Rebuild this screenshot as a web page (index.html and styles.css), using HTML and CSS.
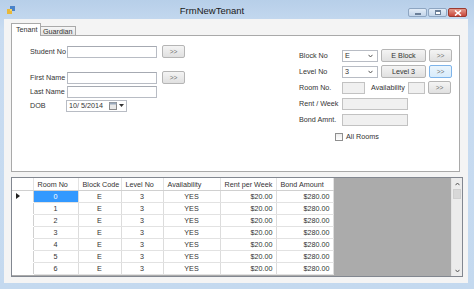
FILE: index.html
```html
<!DOCTYPE html>
<html lang="en">
<head>
  <meta charset="UTF-8">
  <title>FrmNewTenant</title>
  <link rel="stylesheet" href="styles.css">
</head>
<body>
  <div class="window">
    <div class="titlebar">
      <svg class="app-icon" width="8" height="8" viewBox="0 0 8 8">
        <rect x="0" y="3" width="5" height="5" fill="#e8b83a"/>
        <rect x="3" y="0" width="5" height="5" fill="#4a82c8"/>
        <rect x="3" y="3" width="2" height="2" fill="#f3d36b"/>
      </svg>
      <div class="title">FrmNewTenant</div>
      <div class="caption-btns">
        <div class="cap-btn"><span class="min-glyph"></span></div>
        <div class="cap-btn"><span class="max-glyph"></span></div>
        <div class="cap-btn close">
          <svg width="8" height="6" viewBox="0 0 8 6"><path d="M1 0.5 L7 5.5 M7 0.5 L1 5.5" stroke="#fff" stroke-width="1.6"/></svg>
        </div>
      </div>
    </div>

    <div class="client">
      <div class="tabs">
        <div class="tab active">Tenant</div>
        <div class="tab">Guardian</div>
      </div>
      <div class="tabpage">
        <div class="left">
          <div class="row">
            <span class="label">Student No</span>
            <span class="input w90"></span>
            <button class="btn more">&gt;&gt;</button>
          </div>
          <div class="row gap-big">
            <span class="label">First Name</span>
            <span class="input w90"></span>
            <button class="btn more">&gt;&gt;</button>
          </div>
          <div class="row gap-small">
            <span class="label">Last Name</span>
            <span class="input w90"></span>
          </div>
          <div class="row gap-small">
            <span class="label">DOB</span>
            <span class="date">
              <span class="date-text">10/ 5/2014</span>
              <svg width="8" height="8" viewBox="0 0 8 8">
                <rect x="0.5" y="0.5" width="7" height="7" fill="#e8e8e8" stroke="#8a8a8a"/>
                <rect x="0.5" y="0.5" width="7" height="2" fill="#9aa9bb"/>
              </svg>
              <svg width="5" height="3" viewBox="0 0 5 3"><path d="M0 0 H5 L2.5 3 Z" fill="#333"/></svg>
            </span>
          </div>
        </div>

        <div class="right">
          <div class="row">
            <span class="label r">Block No</span>
            <span class="combo"><span>E</span><svg width="5" height="4" viewBox="0 0 5 4"><path d="M0.5 0.8 L2.5 3 L4.5 0.8" fill="none" stroke="#555" stroke-width="1"/></svg></span>
            <button class="btn wide">E Block</button>
            <button class="btn more">&gt;&gt;</button>
          </div>
          <div class="row">
            <span class="label r">Level No</span>
            <span class="combo"><span>3</span><svg width="5" height="4" viewBox="0 0 5 4"><path d="M0.5 0.8 L2.5 3 L4.5 0.8" fill="none" stroke="#555" stroke-width="1"/></svg></span>
            <button class="btn wide">Level 3</button>
            <button class="btn more hot">&gt;&gt;</button>
          </div>
          <div class="row">
            <span class="label r">Room No.</span>
            <span class="input ro w23"></span>
            <span class="avail">Availability</span>
            <span class="input ro w17"></span>
            <button class="btn more">&gt;&gt;</button>
          </div>
          <div class="row">
            <span class="label r">Rent / Week</span>
            <span class="input ro w66"></span>
          </div>
          <div class="row">
            <span class="label r">Bond Amnt.</span>
            <span class="input ro w66"></span>
          </div>
          <div class="check-row">
            <span class="checkbox"></span>
            <span>All Rooms</span>
          </div>
        </div>
      </div>

      <div class="grid">
        <table class="data">
          <colgroup>
            <col class="c-head"><col class="c-room"><col class="c-block"><col class="c-level">
            <col class="c-avail"><col class="c-rent"><col class="c-bond">
          </colgroup>
          <thead>
            <tr>
              <th></th><th>Room No</th><th>Block Code</th><th>Level No</th>
              <th>Availability</th><th>Rent per Week</th><th>Bond Amount</th>
            </tr>
          </thead>
          <tbody>
            <tr>
              <td class="rh"><svg width="4" height="6" viewBox="0 0 4 6"><path d="M0 0 L4 3 L0 6 Z" fill="#222"/></svg></td>
              <td class="sel">0</td><td>E</td><td>3</td><td>YES</td><td class="num">$20.00</td><td class="num">$280.00</td>
            </tr>
            <tr><td class="rh"></td><td>1</td><td>E</td><td>3</td><td>YES</td><td class="num">$20.00</td><td class="num">$280.00</td></tr>
            <tr><td class="rh"></td><td>2</td><td>E</td><td>3</td><td>YES</td><td class="num">$20.00</td><td class="num">$280.00</td></tr>
            <tr><td class="rh"></td><td>3</td><td>E</td><td>3</td><td>YES</td><td class="num">$20.00</td><td class="num">$280.00</td></tr>
            <tr><td class="rh"></td><td>4</td><td>E</td><td>3</td><td>YES</td><td class="num">$20.00</td><td class="num">$280.00</td></tr>
            <tr><td class="rh"></td><td>5</td><td>E</td><td>3</td><td>YES</td><td class="num">$20.00</td><td class="num">$280.00</td></tr>
            <tr><td class="rh"></td><td>6</td><td>E</td><td>3</td><td>YES</td><td class="num">$20.00</td><td class="num">$280.00</td></tr>
          </tbody>
        </table>
        <div class="fill"></div>
        <div class="scrollbar">
          <div class="sb-arrow"><svg width="5" height="4" viewBox="0 0 5 4"><path d="M0.5 3.2 L2.5 1 L4.5 3.2" fill="none" stroke="#555" stroke-width="1"/></svg></div>
          <div class="sb-thumb"></div>
          <div class="sb-track"></div>
          <div class="sb-arrow"><svg width="5" height="4" viewBox="0 0 5 4"><path d="M0.5 0.8 L2.5 3 L4.5 0.8" fill="none" stroke="#555" stroke-width="1"/></svg></div>
        </div>
      </div>
    </div>
  </div>
</body>
</html>
```

FILE: styles.css
```css
body {
  margin: 0;
  padding: 0;
  font-family: "Liberation Sans", Arial, sans-serif;
  font-size: 7.2px;
  color: #333;
  background: #c4d9ef;
}
.window {
  width: 474px;
  height: 289px;
  display: flex;
  flex-direction: column;
  background: linear-gradient(#b7cfe9, #c9dcf1 30px, #c4d9ef);
}
.titlebar {
  height: 19px;
  display: flex;
  align-items: center;
  padding-left: 7px;
}
.app-icon {
  margin-top: 1px;
}
.title {
  flex: 1;
  text-align: center;
  font-size: 9.5px;
  color: #1a1a1a;
  padding-left: 2px;
  margin-top: 2px;
}
.caption-btns {
  display: flex;
  align-self: flex-start;
  margin-top: 8px;
  margin-right: 7px;
}
.cap-btn {
  width: 19px;
  height: 9px;
  border: 1px solid #8ea6c2;
  border-radius: 2px;
  background: linear-gradient(#e2ecf7, #c3d5ea);
  display: flex;
  align-items: center;
  justify-content: center;
  box-sizing: border-box;
  margin-left: 1px;
}
.cap-btn.close {
  background: linear-gradient(#e39a8c, #c9463a);
  border-color: #9c3a30;
}
.min-glyph {
  width: 6px;
  height: 2px;
  background: #fff;
  border: 1px solid #6a7f99;
  box-sizing: border-box;
  margin-top: 2px;
}
.max-glyph {
  width: 6px;
  height: 5px;
  border: 1px solid #6a7f99;
  border-top-width: 2px;
  background: #fff;
  box-sizing: border-box;
}
.client {
  flex: 1;
  margin: 0 6px 6px 4px;
  background: #f4f4f4;
  padding: 4px 0 0 7px;
  display: flex;
  flex-direction: column;
}
.tabs {
  display: flex;
  align-items: flex-end;
  height: 12px;
  position: relative;
  z-index: 1;
}
.tab {
  height: 9px;
  line-height: 9px;
  padding: 0 2px;
  border: 1px solid #a9a9a9;
  border-bottom: none;
  border-left: none;
  background: linear-gradient(#f6f6f6, #e4e4e4);
  box-sizing: border-box;
  white-space: nowrap;
}
.tab.active {
  height: 13px;
  line-height: 12px;
  background: #fff;
  margin-bottom: -1px;
  width: 30px;
  padding-left: 4px;
  border-left: 1px solid #a9a9a9;
}
.tabpage {
  width: 449px;
  height: 137px;
  box-sizing: border-box;
  border: 1px solid #a9a9a9;
  background: #fff;
  display: flex;
}
.left {
  padding: 9px 0 0 18px;
}
.right {
  margin-left: auto;
  padding: 13px 7px 0 0;
  width: 153px;
}
.row {
  display: flex;
  align-items: center;
  height: 13px;
  white-space: nowrap;
}
.right .row {
  margin-bottom: 3px;
}
.gap-big {
  margin-top: 13px;
}
.gap-small {
  margin-top: 1px;
}
.label {
  width: 37px;
  flex-shrink: 0;
}
.label.r {
  width: 43px;
}
.input {
  height: 12px;
  box-sizing: border-box;
  border: 1px solid #b8bcc4;
  border-top-color: #a6aab2;
  background: #fff;
  flex-shrink: 0;
}
.input.ro {
  background: #f0f0f0;
  border-color: #c2c2c2;
}
.w90 { width: 90px; }
.w66 { width: 66px; }
.w23 { width: 23px; }
.w17 { width: 17px; }
.btn {
  font-family: inherit;
  font-size: 7.2px;
  height: 13px;
  padding: 0;
  border: 1px solid #b5b5b5;
  border-radius: 2px;
  background: linear-gradient(#f4f4f4, #e0e0e0);
  color: #333;
  flex-shrink: 0;
}
.btn.more {
  width: 23px;
  margin-left: 5px;
  color: #707070;
  font-size: 6.6px;
}
.right .btn.more {
  margin-left: 3px;
}
.btn.wide {
  width: 45px;
  margin-left: 3px;
}
.btn.hot {
  border-color: #7eb4ea;
  background: linear-gradient(#eaf5fd, #d9ecfb);
}
.date {
  width: 61px;
  height: 12px;
  margin-left: -1px;
  box-sizing: border-box;
  border: 1px solid #b8bcc4;
  display: flex;
  align-items: center;
  gap: 2px;
  padding: 0 2px;
}
.date-text {
  flex: 1;
}
.combo {
  width: 36px;
  height: 12px;
  box-sizing: border-box;
  border: 1px solid #b8bcc4;
  display: flex;
  align-items: center;
  justify-content: space-between;
  padding: 0 4px 0 2px;
}
.avail {
  margin-left: 6px;
  width: 37px;
}
.check-row {
  display: flex;
  align-items: center;
  gap: 3px;
  margin-top: 6px;
  padding-left: 36px;
}
.checkbox {
  width: 8px;
  height: 8px;
  box-sizing: border-box;
  border: 1px solid #8f8f8f;
  background: linear-gradient(#ededed, #fff);
}
.grid {
  margin-top: 5px;
  width: 452px;
  height: 100px;
  box-sizing: border-box;
  border: 1px solid #828790;
  display: flex;
  background: #ababab;
}
.data {
  border-collapse: collapse;
  table-layout: fixed;
  width: 321px;
  background: #fff;
  align-self: flex-start;
}
.c-head { width: 21px; }
.c-room { width: 45px; }
.c-block { width: 43px; }
.c-level { width: 42px; }
.c-avail { width: 57px; }
.c-rent { width: 56px; }
.c-bond { width: 57px; }
.data th {
  height: 12px;
  font-weight: normal;
  text-align: left;
  padding: 0 0 0 4px;
  border-right: 1px solid #e3e3e3;
  border-bottom: 1px solid #d0d0d0;
  white-space: nowrap;
  overflow: hidden;
}
.data td {
  height: 11px;
  padding: 0 3px;
  text-align: center;
  border-right: 1px solid #dcdcdc;
  border-bottom: 1px solid #e2e2e2;
  white-space: nowrap;
}
.data td.rh {
  border-bottom-color: #fff;
  border-right-color: #d0d0d0;
  text-align: left;
  padding-left: 4px;
}
.data td.num {
  text-align: right;
}
.data td.sel {
  background: #3399ff;
  color: #fff;
}
.fill {
  flex: 1;
}
.scrollbar {
  width: 10px;
  display: flex;
  flex-direction: column;
  background: #ececec;
  border-left: 1px solid #e4e4e4;
}
.sb-arrow {
  height: 11px;
  display: flex;
  align-items: center;
  justify-content: center;
}
.sb-thumb {
  height: 10px;
  margin: 0 1px;
  background: #d8d8d8;
  border: 1px solid #cfcfcf;
  box-sizing: border-box;
}
.sb-track {
  flex: 1;
}
```
